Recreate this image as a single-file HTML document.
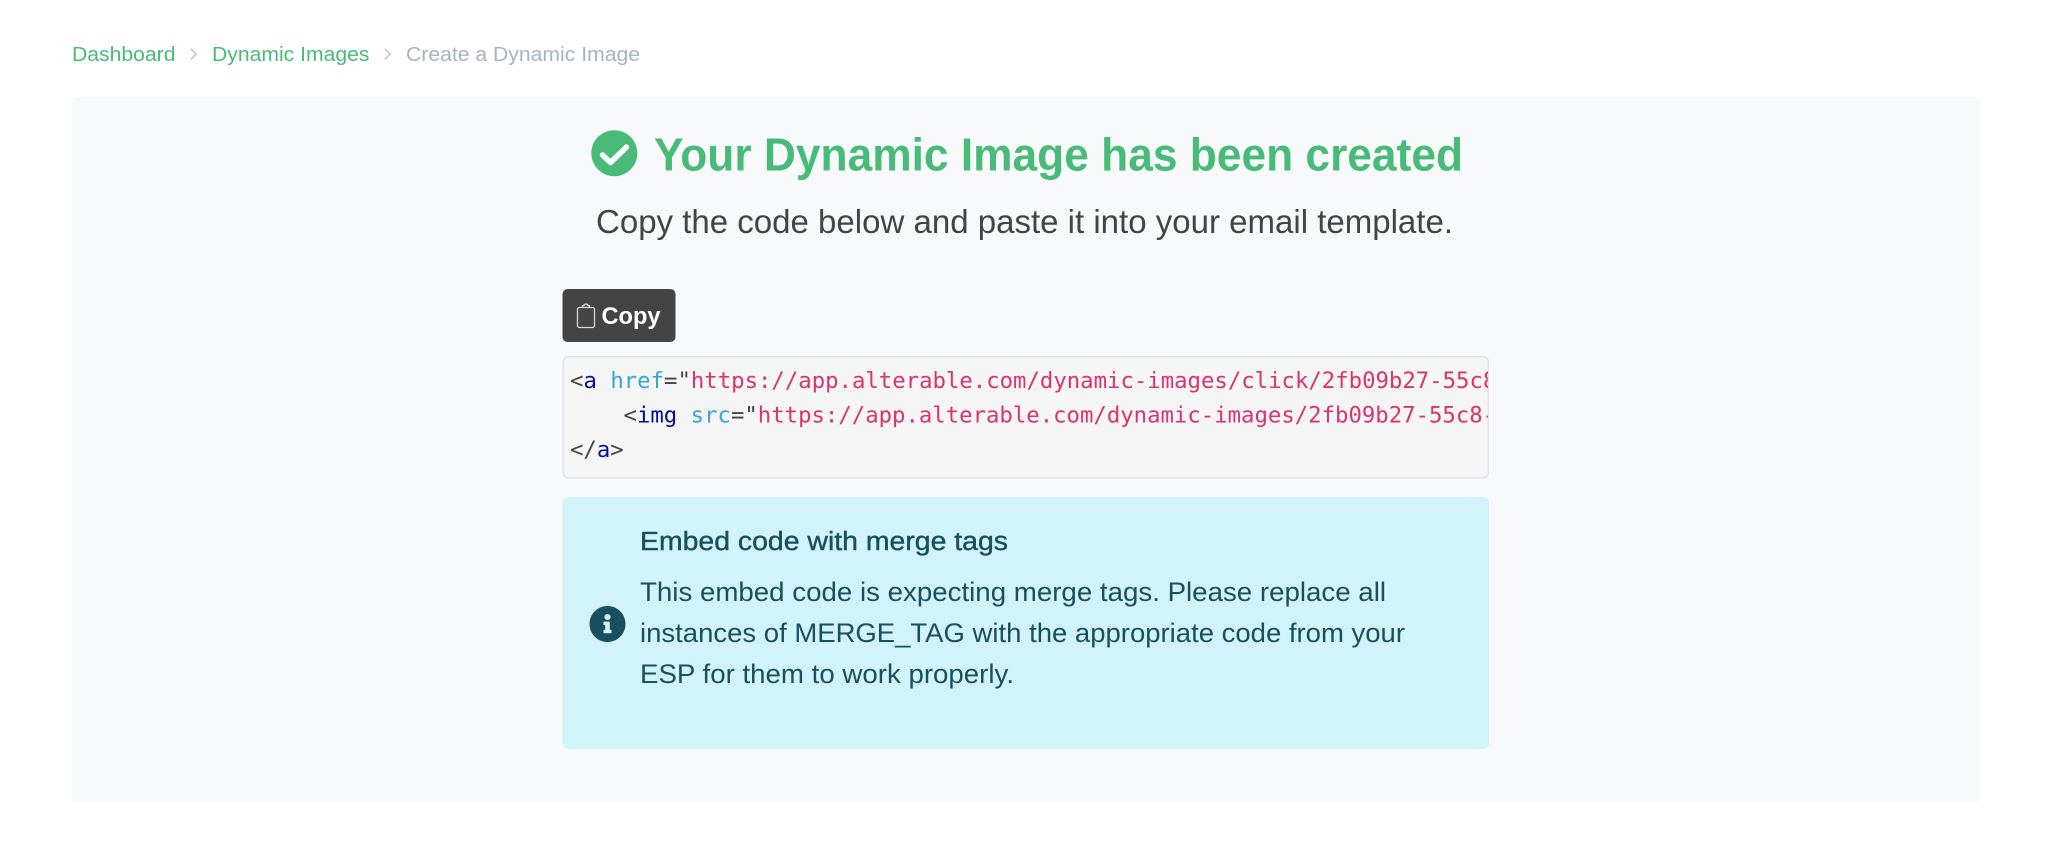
<!DOCTYPE html>
<html lang="en">
<head>
<meta charset="utf-8">
<title>Create a Dynamic Image</title>
<style>
html,body{margin:0;padding:0;background:#fff;width:2048px;height:865px;overflow:hidden}
svg{display:block}
text{font-family:"Liberation Sans",Arial,sans-serif}
.mono{font-family:"DejaVu Sans Mono","Liberation Mono",monospace;font-size:22.3px;fill:#444}
.t{fill:#000f96}.at{fill:#36a5d8}.s{fill:#d9346c}
.al{font-size:26.400px;fill:#1a4f5e}
</style>
</head>
<body>
<svg width="2048" height="865" viewBox="0 0 2048 865" xmlns="http://www.w3.org/2000/svg">
<defs><clipPath id="cc"><rect x="563" y="357" width="925" height="120"/></clipPath></defs>

<text x="72" y="61" font-size="20.500" fill="#48bb78" textLength="103.500" lengthAdjust="spacingAndGlyphs">Dashboard</text>
<path d="M190.800 48.800l5.300 5.300-5.300 5.300" fill="none" stroke="#b4bdca" stroke-width="1.300"/>
<text x="212" y="61" font-size="20.500" fill="#48bb78" textLength="157.500" lengthAdjust="spacingAndGlyphs">Dynamic Images</text>
<path d="M384.800 48.800l5.300 5.300-5.300 5.300" fill="none" stroke="#b4bdca" stroke-width="1.300"/>
<text x="406" y="61" font-size="20.500" fill="#a8b2c0" textLength="234" lengthAdjust="spacingAndGlyphs">Create a Dynamic Image</text>

<rect x="72" y="97" width="1908" height="706" rx="7" fill="#f8f9fb"/>

<circle cx="614.300" cy="153.200" r="23" fill="#48bb78"/>
<path d="M602.500 155l8 7.500 16-15.500" fill="none" stroke="#fff" stroke-width="5.400" stroke-linecap="round" stroke-linejoin="round"/>
<text x="654" y="170.500" font-size="46.500" font-weight="700" fill="#48bb78" textLength="809" lengthAdjust="spacingAndGlyphs">Your Dynamic Image has been created</text>
<text x="596" y="233" font-size="33" fill="#444" textLength="857" lengthAdjust="spacingAndGlyphs">Copy the code below and paste it into your email template.</text>

<rect x="562.500" y="289" width="113" height="53" rx="5" fill="#444"/>
<rect x="577.500" y="307.500" width="17" height="20" rx="1.800" fill="none" stroke="#d6d6d6" stroke-width="1.300"/>
<path d="M582.500 307.500v-1.800h1.300a2.300 2.300 0 0 1 4.400 0h1.300v1.800" fill="none" stroke="#d6d6d6" stroke-width="1.300"/>
<text x="601.500" y="324" font-size="24.500" font-weight="700" fill="#fff" textLength="59" lengthAdjust="spacingAndGlyphs">Copy</text>

<rect x="563.250" y="356.750" width="925" height="121" rx="5" fill="#f5f5f5" stroke="#e1e5ea" stroke-width="1.500"/>
<g clip-path="url(#cc)">
<text class="mono" x="570" y="388" xml:space="preserve">&lt;<tspan class="t">a</tspan> <tspan class="at">href</tspan>="<tspan class="s">https://app.alterable.com/dynamic-images/click/2fb09b27-55c8</tspan></text>
<text class="mono" x="623.500" y="422.500" xml:space="preserve">&lt;<tspan class="t">img</tspan> <tspan class="at">src</tspan>="<tspan class="s">https://app.alterable.com/dynamic-images/2fb09b27-55c8-</tspan></text>
<text class="mono" x="570" y="457" xml:space="preserve">&lt;/<tspan class="t">a</tspan>&gt;</text>
</g>

<rect x="562.500" y="497" width="926.500" height="252" rx="6" fill="#d1f3fa"/>
<svg x="589.500" y="606" width="36" height="36" viewBox="8 8 496 496"><path fill="#1a4f5e" d="M256 8C119.043 8 8 119.083 8 256c0 136.997 111.043 248 248 248s248-111.003 248-248C504 119.083 392.957 8 256 8zm0 110c23.196 0 42 18.804 42 42s-18.804 42-42 42-42-18.804-42-42 18.804-42 42-42zm56 254c0 6.627-5.373 12-12 12h-88c-6.627 0-12-5.373-12-12v-24c0-6.627 5.373-12 12-12h12v-64h-12c-6.627 0-12-5.373-12-12v-24c0-6.627 5.373-12 12-12h64c6.627 0 12 5.373 12 12v100h12c6.627 0 12 5.373 12 12v24z"/></svg>
<text x="640" y="550" font-size="25.500" fill="#1a4f5e" stroke="#1a4f5e" stroke-width="0.400" textLength="368" lengthAdjust="spacingAndGlyphs">Embed code with merge tags</text>
<text class="al" x="640" y="601" textLength="746" lengthAdjust="spacingAndGlyphs">This embed code is expecting merge tags. Please replace all</text>
<text class="al" x="640" y="642" textLength="765" lengthAdjust="spacingAndGlyphs">instances of MERGE_TAG with the appropriate code from your</text>
<text class="al" x="640" y="683" textLength="374" lengthAdjust="spacingAndGlyphs">ESP for them to work properly.</text>
</svg>
</body>
</html>
